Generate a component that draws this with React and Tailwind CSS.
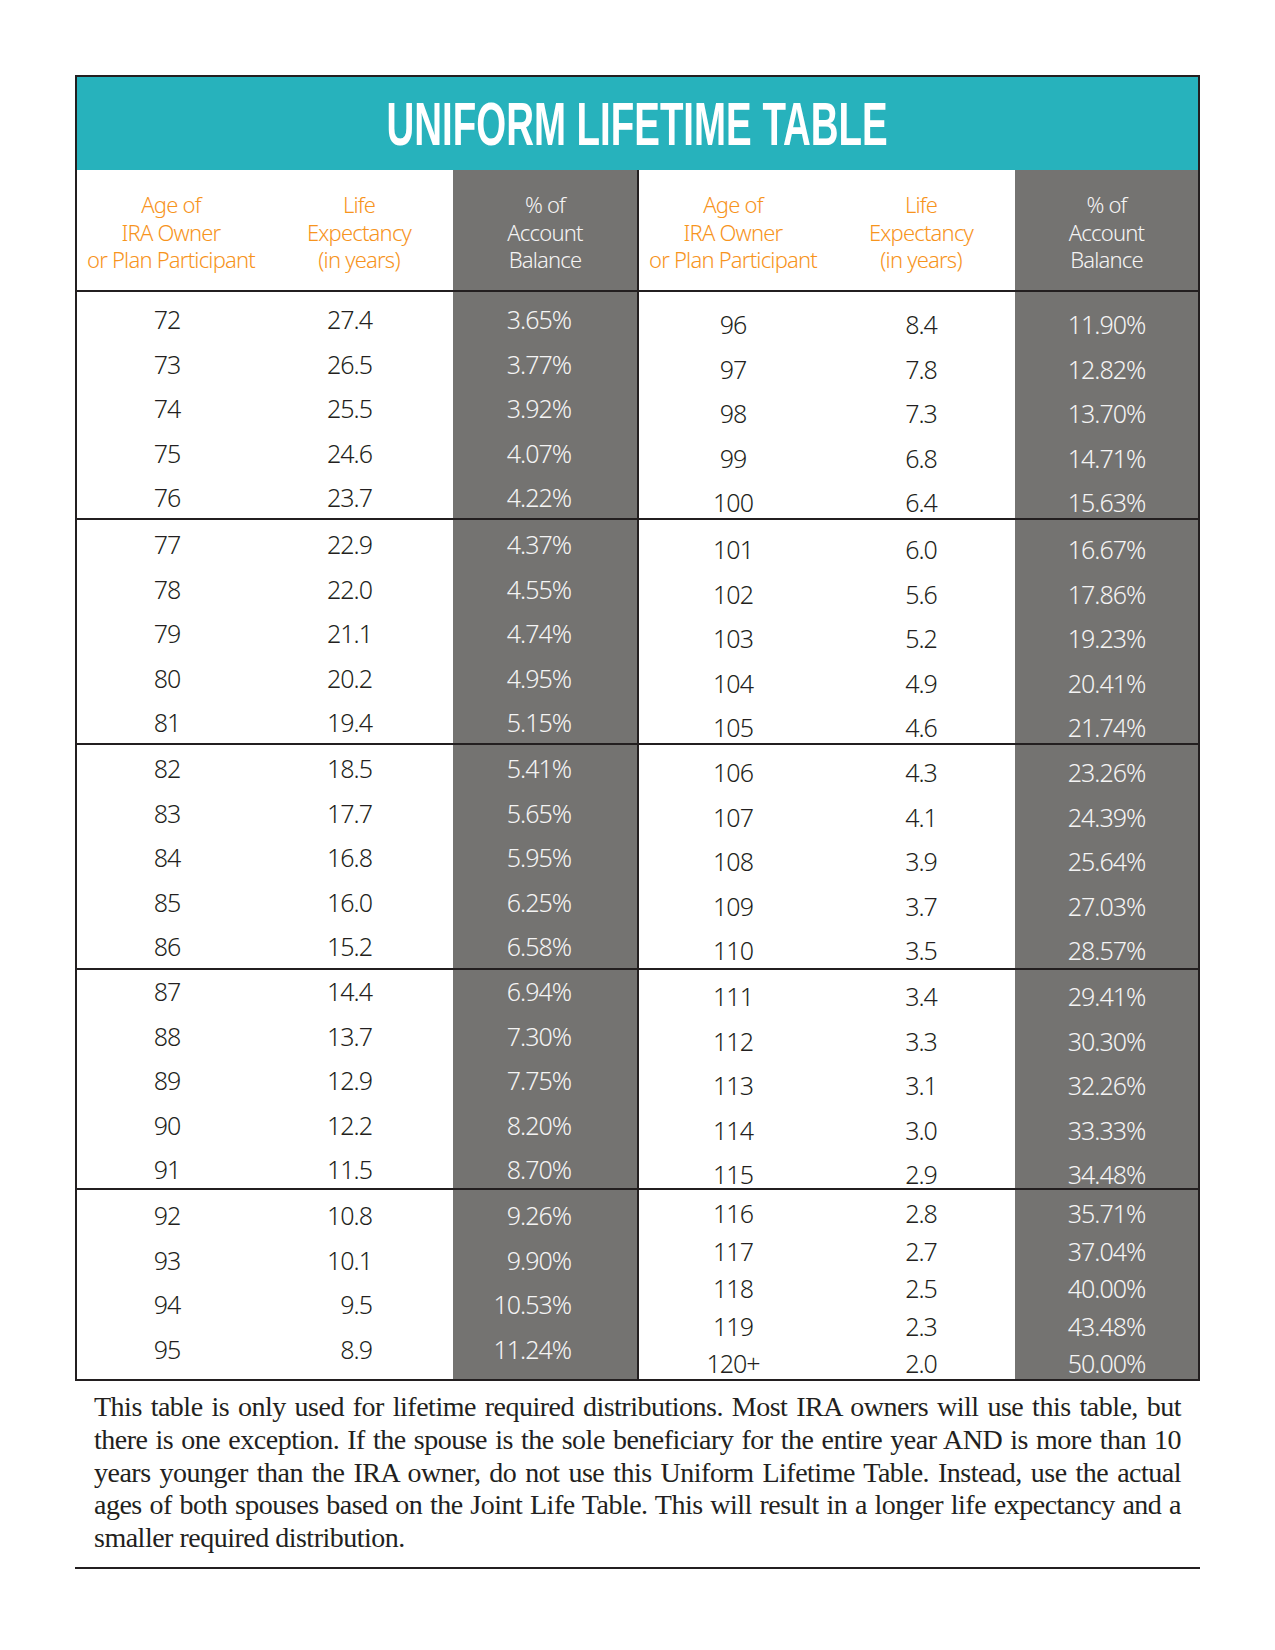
const left = [
  [['72', '27.4', '3.65%'], ['73', '26.5', '3.77%'], ['74', '25.5', '3.92%'], ['75', '24.6', '4.07%'], ['76', '23.7', '4.22%']],
  [['77', '22.9', '4.37%'], ['78', '22.0', '4.55%'], ['79', '21.1', '4.74%'], ['80', '20.2', '4.95%'], ['81', '19.4', '5.15%']],
  [['82', '18.5', '5.41%'], ['83', '17.7', '5.65%'], ['84', '16.8', '5.95%'], ['85', '16.0', '6.25%'], ['86', '15.2', '6.58%']],
  [['87', '14.4', '6.94%'], ['88', '13.7', '7.30%'], ['89', '12.9', '7.75%'], ['90', '12.2', '8.20%'], ['91', '11.5', '8.70%']],
  [['92', '10.8', '9.26%'], ['93', '10.1', '9.90%'], ['94', '9.5', '10.53%'], ['95', '8.9', '11.24%']],
];

const right = [
  [['96', '8.4', '11.90%'], ['97', '7.8', '12.82%'], ['98', '7.3', '13.70%'], ['99', '6.8', '14.71%'], ['100', '6.4', '15.63%']],
  [['101', '6.0', '16.67%'], ['102', '5.6', '17.86%'], ['103', '5.2', '19.23%'], ['104', '4.9', '20.41%'], ['105', '4.6', '21.74%']],
  [['106', '4.3', '23.26%'], ['107', '4.1', '24.39%'], ['108', '3.9', '25.64%'], ['109', '3.7', '27.03%'], ['110', '3.5', '28.57%']],
  [['111', '3.4', '29.41%'], ['112', '3.3', '30.30%'], ['113', '3.1', '32.26%'], ['114', '3.0', '33.33%'], ['115', '2.9', '34.48%']],
  [['116', '2.8', '35.71%'], ['117', '2.7', '37.04%'], ['118', '2.5', '40.00%'], ['119', '2.3', '43.48%'], ['120+', '2.0', '50.00%']],
];

// per group: height, top pad left/right, gap between rows left/right
const groups = [
  { h: 'h-[228px]', pl: 'pt-[15px]', pr: 'pt-[20px]', gl: 'gap-[20.6px]', gr: 'gap-[20.6px]' },
  { h: 'h-[225px]', pl: 'pt-[12px]', pr: 'pt-[17px]', gl: 'gap-[20.6px]', gr: 'gap-[20.6px]' },
  { h: 'h-[225px]', pl: 'pt-[11px]', pr: 'pt-[15px]', gl: 'gap-[20.6px]', gr: 'gap-[20.6px]' },
  { h: 'h-[220px]', pl: 'pt-[9px]', pr: 'pt-[14px]', gl: 'gap-[20.6px]', gr: 'gap-[20.6px]' },
  { h: 'h-[189px]', pl: 'pt-[13px]', pr: 'pt-[11px]', gl: 'gap-[20.6px]', gr: 'gap-[13.6px]' },
];

const sans = "font-['Noto_Sans',Lato,sans-serif] font-light";

function HalfHeader({ divider }) {
  return (
    <div className={`grid grid-cols-[188px_188px_1fr] ${divider ? 'border-r-2 border-[#231f20]' : ''}`}>
      <div className="flex items-center justify-center pt-[5px] text-center text-[#f7941d] text-[22px] tracking-[-0.8px] leading-[27.4px]">
        <div>Age of<br />IRA Owner<br />or Plan Participant</div>
      </div>
      <div className="flex items-center justify-center pt-[5px] text-center text-[#f7941d] text-[22px] tracking-[-0.8px] leading-[27.4px]">
        <div>Life<br />Expectancy<br />(in years)</div>
      </div>
      <div className="flex items-center justify-center pt-[5px] text-center bg-[#747371] text-[#f4f4f4] text-[22px] tracking-[-0.8px] leading-[27.4px]">
        <div>% of<br />Account<br />Balance</div>
      </div>
    </div>
  );
}

function HalfGroup({ rows, pad, gap, divider, first }) {
  // the left half keeps its 2nd and 3rd columns right-aligned, as in the print
  const c2 = first ? 'items-end pr-[81px]' : 'items-center';
  const c3 = first ? 'items-end pr-[66px]' : 'items-center';
  return (
    <div className={`grid grid-cols-[188px_188px_1fr] ${divider ? 'border-r-2 border-[#231f20]' : ''}`}>
      <div className={`${pad} ${gap} flex flex-col items-center ${first ? 'pr-[8px]' : ''} text-[#231f20]`}>
        {rows.map((r) => (
          <div key={r[0]} className="leading-[24px]">{r[0]}</div>
        ))}
      </div>
      <div className={`${pad} ${gap} flex flex-col ${c2} text-[#231f20]`}>
        {rows.map((r) => (
          <div key={r[0]} className="leading-[24px]">{r[1]}</div>
        ))}
      </div>
      <div className={`${pad} ${gap} flex flex-col ${c3} bg-[#747371] text-[#f4f4f4]`}>
        {rows.map((r) => (
          <div key={r[0]} className="leading-[24px]">{r[2]}</div>
        ))}
      </div>
    </div>
  );
}

const note = [
  'This table is only used for lifetime required distributions. Most IRA owners will use this table, but',
  'there is one exception. If the spouse is the sole beneficiary for the entire year AND is more than 10',
  'years younger than the IRA owner, do not use this Uniform Lifetime Table. Instead, use the actual',
  'ages of both spouses based on the Joint Life Table. This will result in a longer life expectancy and a',
];

export default function App() {
  return (
    <div className="w-[1275px] min-h-[1650px] bg-white pt-[75px] pl-[75px]">
      <div className={`w-[1125px] border-2 border-[#231f20] ${sans}`}>
        {/* Title */}
        <div className="h-[93px] bg-[#27b2bc] flex items-center justify-center overflow-hidden">
          <span className="inline-block scale-x-[0.62] font-['Liberation_Sans',Arial,sans-serif] font-bold text-[62px] leading-none text-white whitespace-nowrap">
            UNIFORM LIFETIME TABLE
          </span>
        </div>

        {/* Column headings */}
        <div className="grid grid-cols-[562px_1fr] h-[122px] border-b-2 border-[#231f20]">
          <HalfHeader divider />
          <HalfHeader />
        </div>

        {/* Body */}
        {groups.map((g, i) => (
          <div
            key={i}
            className={`grid grid-cols-[562px_1fr] ${g.h} text-[25px] tracking-[-1px] ${i < groups.length - 1 ? 'border-b-2 border-[#231f20]' : ''}`}
          >
            <HalfGroup rows={left[i]} pad={g.pl} gap={g.gl} divider first />
            <HalfGroup rows={right[i]} pad={g.pr} gap={g.gr} />
          </div>
        ))}
      </div>

      {/* Note */}
      <div className="w-[1125px] pl-[19px] pr-[19px] pt-[10px] pb-[12px] font-['Liberation_Serif','Times_New_Roman',serif] text-[28px] tracking-[-0.5px] leading-[32.8px] text-[#231f20]">
        {note.map((line) => (
          <div key={line} className="text-justify [text-align-last:justify] whitespace-nowrap">{line}</div>
        ))}
        <div>smaller required distribution.</div>
      </div>
      <div className="w-[1125px] h-[2px] bg-[#231f20]" />
    </div>
  );
}
